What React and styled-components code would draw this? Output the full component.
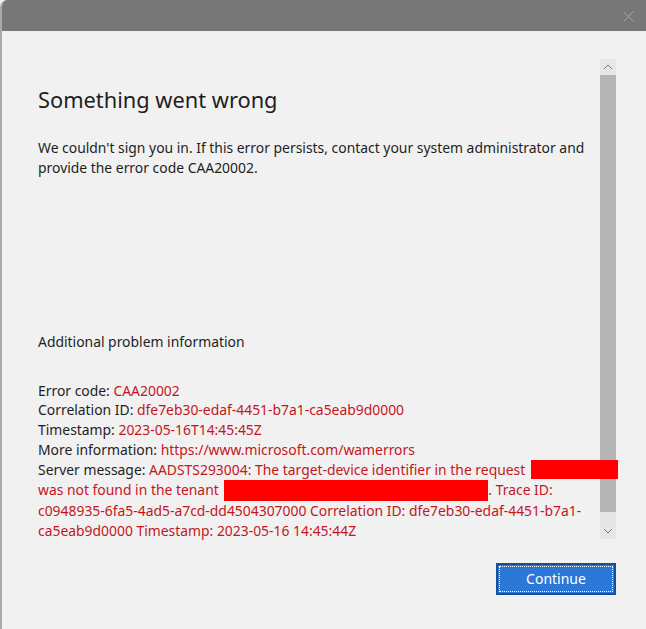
import React from "react"
import styled, { createGlobalStyle } from "styled-components"

const GlobalStyle = createGlobalStyle`
  html, body {
    margin: 0;
    padding: 0;
    background: #f1f1f1;
  }
  body {
    font-family: "Segoe UI", "Noto Sans", "Open Sans", sans-serif;
  }
`

const Window = styled.div`
  width: 644px;
  height: 629px;
  display: flex;
  flex-direction: column;
  background: #f1f1f1;
  border-left: 2px solid #a9a9a9;
  border-top-left-radius: 7px;
  overflow: hidden;
`

const TitleBar = styled.div`
  height: 31px;
  flex-shrink: 0;
  background: #777777;
  display: flex;
  justify-content: flex-end;
  align-items: center;
  padding-right: 12px;
`

const CloseButton = styled.button`
  width: 11px;
  height: 11px;
  padding: 0;
  border: none;
  background: none;
  display: flex;
  margin-top: 1px;
`

const Body = styled.div`
  flex: 1;
  display: flex;
  padding-top: 28px;
`

const Content = styled.div`
  flex: 1;
  min-width: 0;
  padding: 0 0 0 36px;
  color: #1e1e1e;
`

const Title = styled.h1`
  margin: 26px 0 0;
  font-size: 21.8px;
  font-weight: 400;
  line-height: 30px;
`

const Text = styled.p`
  margin: ${(p) => p.$top || 0}px 0 0;
  font-size: 13.9px;
  line-height: 19.86px;
  white-space: nowrap;
`

const Red = styled.span`
  color: #c4161c;
`

const Redacted = styled.span`
  position: relative;
  z-index: 1;
  display: inline-block;
  vertical-align: ${(p) => p.$va || 0}px;
  height: ${(p) => p.$h || 20}px;
  width: ${(p) => p.$w}px;
  margin-left: 2px;
  background: #ff0000;
`

const Scrollbar = styled.div`
  width: 16px;
  height: 480px;
  flex-shrink: 0;
  margin-right: 30px;
  display: flex;
  flex-direction: column;
  background: #e6e6e6;
`

const ArrowBox = styled.div`
  height: ${(p) => p.$h}px;
  display: flex;
  align-items: ${(p) => (p.$down ? "flex-end" : "center")};
  padding-bottom: ${(p) => (p.$down ? 5 : 0)}px;
  justify-content: center;
  box-sizing: border-box;
`

const Thumb = styled.div`
  height: 437px;
  background: #b5b5b5;
`

const Footer = styled.div`
  height: 90px;
  display: flex;
  justify-content: flex-end;
  align-items: flex-start;
  padding: 22px 30px 0 0;
  box-sizing: border-box;
`

const Button = styled.button`
  position: relative;
  width: 120px;
  height: 32px;
  background: #2b78d8;
  border: 2px solid #1b4f93;
  color: #ffffff;
  font-family: "Segoe UI", "Noto Sans", "Open Sans", sans-serif;
  font-size: 14px;
  padding: 0 0 1px;
  &::after {
    content: "";
    position: absolute;
    inset: 1px;
    border: 1px dotted #ffffff;
  }
`

const Chevron = ({ down }) => (
  <svg width="10" height="6" viewBox="0 0 10 6">
    <path
      d={down ? "M1 1 L5 5 L9 1" : "M1 5 L5 1 L9 5"}
      fill="none"
      stroke="#7a7a7a"
      strokeWidth="1"
    />
  </svg>
)

export default function App() {
  return (
    <>
      <GlobalStyle />
      <Window>
        <TitleBar>
          <CloseButton aria-label="Close">
            <svg width="11" height="11" viewBox="0 0 11 11">
              <path d="M0.5 0.5 L10.5 10.5 M10.5 0.5 L0.5 10.5" stroke="#a6a6a6" strokeWidth="1" />
            </svg>
          </CloseButton>
        </TitleBar>
        <Body>
          <Content>
            <Title>Something went wrong</Title>
            <Text $top={23}>
              We couldn't sign you in. If this error persists, contact your system administrator and
              <br />
              provide the error code CAA20002.
            </Text>
            <Text $top={154}>Additional problem information</Text>
            <Text $top={29}>
              Error code: <Red>CAA20002</Red>
              <br />
              Correlation ID: <Red>dfe7eb30-edaf-4451-b7a1-ca5eab9d0000</Red>
              <br />
              Timestamp: <Red>2023-05-16T14:45:45Z</Red>
              <br />
              More information: <Red>https://www.microsoft.com/wamerrors</Red>
              <br />
              Server message:{" "}
              <Red>
                AADSTS293004: The target-device identifier in the request{" "}
                <Redacted $w={87} $h={19} $va={-4} />
                <br />
                was not found in the tenant <Redacted $w={264} $h={21} $va={-6} />. Trace ID:
                <br />
                c0948935-6fa5-4ad5-a7cd-dd4504307000 Correlation ID: dfe7eb30-edaf-4451-b7a1-
                <br />
                ca5eab9d0000 Timestamp: 2023-05-16 14:45:44Z
              </Red>
            </Text>
          </Content>
          <Scrollbar>
            <ArrowBox $h={16}>
              <Chevron />
            </ArrowBox>
            <Thumb />
            <ArrowBox $h={27} $down>
              <Chevron down />
            </ArrowBox>
          </Scrollbar>
        </Body>
        <Footer>
          <Button>Continue</Button>
        </Footer>
      </Window>
    </>
  )
}
